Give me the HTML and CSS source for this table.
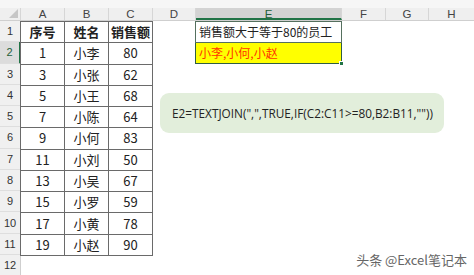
FILE: index.html
```html
<!DOCTYPE html>
<html>
<head>
<meta charset="utf-8">
<link rel="stylesheet" href="styles.css">
</head>
<body>
<div class="sheet">
  <div class="topbar"></div>
  <div class="colheads">
    <div class="corner"><svg width="9" height="9" viewBox="0 0 9 9"><polygon points="9,0 9,9 0,9" fill="#c6c6c6"/></svg></div>
    <div class="ch w44">A</div>
    <div class="ch w44">B</div>
    <div class="ch w44">C</div>
    <div class="ch w43">D</div>
    <div class="ch w146 sel">E</div>
    <div class="ch w44">F</div>
    <div class="ch w43">G</div>
    <div class="ch grow">H</div>
  </div>
  <div class="body">
    <div class="rowheads">
      <div class="rh">1</div>
      <div class="rh sel">2</div>
      <div class="rh">3</div>
      <div class="rh">4</div>
      <div class="rh">5</div>
      <div class="rh">6</div>
      <div class="rh">7</div>
      <div class="rh">8</div>
      <div class="rh">9</div>
      <div class="rh">10</div>
      <div class="rh">11</div>
      <div class="rh">12</div>
    </div>
    <table class="data">
      <tr class="head"><td>序号</td><td>姓名</td><td>销售额</td></tr>
      <tr><td>1</td><td>小李</td><td>80</td></tr>
      <tr><td>3</td><td>小张</td><td>62</td></tr>
      <tr><td>5</td><td>小王</td><td>68</td></tr>
      <tr><td>7</td><td>小陈</td><td>64</td></tr>
      <tr><td>9</td><td>小何</td><td>83</td></tr>
      <tr><td>11</td><td>小刘</td><td>50</td></tr>
      <tr><td>13</td><td>小吴</td><td>67</td></tr>
      <tr><td>15</td><td>小罗</td><td>59</td></tr>
      <tr><td>17</td><td>小黄</td><td>78</td></tr>
      <tr><td>19</td><td>小赵</td><td>90</td></tr>
    </table>
    <div class="colD"></div>
    <div class="colE">
      <div class="e1">销售额大于等于80的员工</div>
      <div class="e2">小李,小何,小赵<span class="handle"></span></div>
    </div>
  </div>
  <div class="formula">E2=TEXTJOIN(",",TRUE,IF(C2:C11&gt;=80,B2:B11,""))</div>
  <div class="watermark">头条 @Excel笔记本</div>
</div>
</body>
</html>
```

FILE: styles.css
```css
* { box-sizing: border-box; }
html, body { margin: 0; padding: 0; background: #fff; }
body {
  width: 474px;
  height: 275px;
  overflow: hidden;
  font-family: "Noto Sans CJK SC", "Noto Sans", sans-serif;
  color: #222;
}
.sheet { position: relative; width: 474px; height: 275px; }
.topbar { height: 8px; background: #f6f6f6; }
.colheads {
  display: flex;
  height: 13px;
  background: #efefef;
  border-bottom: 1px solid #cfcfcf;
}
.corner {
  width: 21px;
  display: flex;
  align-items: flex-end;
  justify-content: flex-end;
  padding: 0 2px 2px 0;
  border-right: 1px solid #d6d6d6;
}
.ch {
  font-family: "Liberation Sans", Arial, sans-serif;
  font-size: 11.5px;
  line-height: 12px;
  color: #444;
  text-align: center;
  border-right: 1px solid #d6d6d6;
}
.ch.sel { background: #d3d3d3; color: #1f5f3a; border-bottom: 2px solid #217346; }
.w44 { width: 44px; }
.w43 { width: 43px; }
.w146 { width: 146px; }
.grow { flex: 1; border-right: none; }
.body { display: flex; align-items: flex-start; }
.rowheads { width: 21px; display: flex; flex-direction: column; }
.rh {
  height: 21.27px;
  background: #f0f0f0;
  border-bottom: 1px solid #dedede;
  border-right: 1px solid #cfcfcf;
  font-family: "Liberation Sans", Arial, sans-serif;
  font-size: 11px;
  color: #333;
  display: flex;
  align-items: center;
  justify-content: center;
}
.rh.sel { background: #dcdcdc; border-right: 2px solid #217346; color: #1f5f3a; }
.data {
  border-collapse: collapse;
  table-layout: fixed;
  width: 133px;
  margin-left: -1px;
}
.data td {
  width: 44px;
  height: 21.27px;
  padding: 0;
  border: 1px solid #6a6a6a;
  text-align: center;
  font-size: 13px;
  line-height: 20px;
  color: #222;
}
.data tr.head td { font-weight: bold; }
.colD { width: 43px; }
.colE { width: 147px; margin-left: -1px; display: flex; flex-direction: column; }
.e1 {
  height: 21.5px;
  border: 1px solid #55705f;
  font-size: 12px;
  line-height: 20px;
  padding-left: 3px;
  color: #222;
  white-space: nowrap;
}
.e2 {
  position: relative;
  height: 21.8px;
  background: #ffff00;
  border: 1px solid #2f5e43;
  border-top: none;
  font-size: 12px;
  line-height: 20px;
  padding-left: 3px;
  color: #ff3300;
  white-space: nowrap;
}
.handle {
  position: absolute;
  right: -3px;
  bottom: -3px;
  width: 5px;
  height: 5px;
  background: #217346;
  border: 1px solid #fff;
}
.formula {
  position: absolute;
  left: 160px;
  top: 93px;
  width: 284px;
  height: 40px;
  border-radius: 9px;
  background: #e2eedb;
  font-family: "Open Sans", "Noto Sans", sans-serif;
  font-size: 11.8px;
  line-height: 40px;
  padding-left: 12px;
  color: #222;
}
.watermark {
  position: absolute;
  right: 7px;
  bottom: 6px;
  font-size: 13px;
  color: #666;
  text-shadow: 0 0 2px #fff, 0 0 1px #fff;
}
```
